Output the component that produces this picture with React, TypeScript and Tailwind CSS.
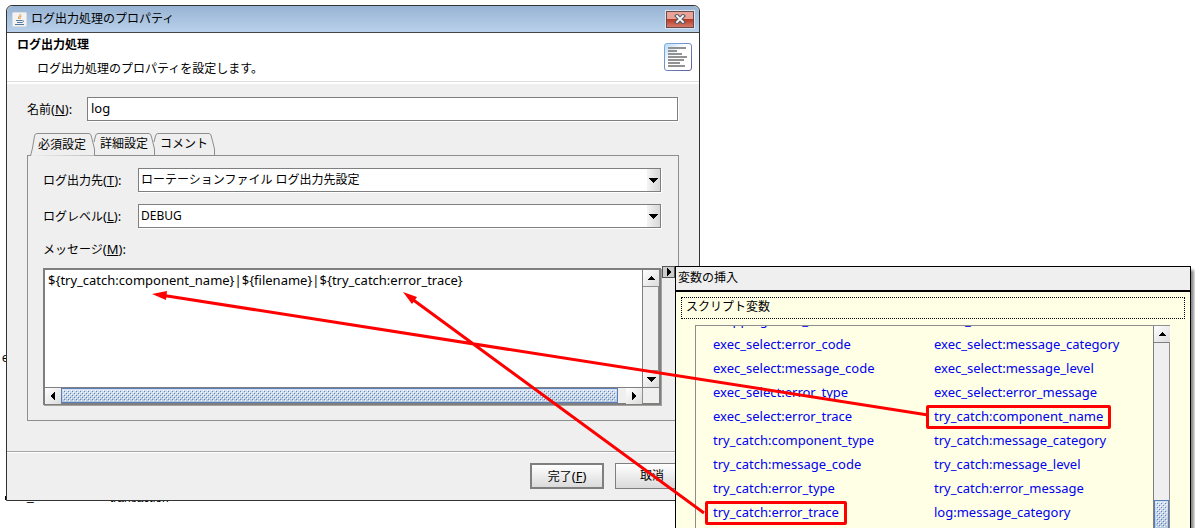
import type { ReactNode } from "react";

const variables = [
  ["mapping:error_trace", "error_level"],
  ["exec_select:error_code", "exec_select:message_category"],
  ["exec_select:message_code", "exec_select:message_level"],
  ["exec_select:error_type", "exec_select:error_message"],
  ["exec_select:error_trace", "try_catch:component_name"],
  ["try_catch:component_type", "try_catch:message_category"],
  ["try_catch:message_code", "try_catch:message_level"],
  ["try_catch:error_type", "try_catch:error_message"],
  ["try_catch:error_trace", "log:message_category"],
];

const highlighted = ["try_catch:component_name", "try_catch:error_trace"];

function Arrow({ dir }: { dir: "up" | "down" | "left" | "right" }) {
  const d = {
    up: "M4 0h1v1h1v1h1v1h1v1H1V3h1V2h1V1h1z",
    down: "M0 0h9v1H8v1H7v1H6v1H5v1H4V4H3V3H2V2H1V1H0z",
    left: "M4 0v8H3V7H2V6H1V5H0V3h1V2h1V1h1V0z",
    right: "M0 0h1v1h1v1h1v1h1v2H3v1H2v1H1v1H0z",
  }[dir];
  const wide = dir === "up" || dir === "down";
  return (
    <svg width={wide ? 9 : 4} height={wide ? 5 : 8} shapeRendering="crispEdges" aria-hidden="true">
      <path d={d} />
    </svg>
  );
}

function ScrollButton({ dir }: { dir: "up" | "down" | "left" | "right" }) {
  return (
    <button
      aria-label={`scroll ${dir}`}
      className="flex size-4 shrink-0 items-center justify-center bg-linear-to-br from-white to-[#dcdcdc]"
    >
      <Arrow dir={dir} />
    </button>
  );
}

function Thumb({ id, className }: { id: string; className: string }) {
  return (
    <div className={`border border-[#5b7db8] bg-linear-to-b from-[#d5e2f1] to-[#b4c9df] p-px ${className}`}>
      <svg className="block h-full w-full" aria-hidden="true">
        <defs>
          <pattern id={id} width="4" height="4" patternUnits="userSpaceOnUse">
            <path d="M1 1h1v1H1zM3 3h1v1H3z" fill="#6685b5" />
            <path d="M0 0h1v1H0zM2 2h1v1H2z" fill="#fff" />
          </pattern>
        </defs>
        <rect width="100%" height="100%" fill={`url(#${id})`} />
      </svg>
    </div>
  );
}

function Hotkey({ children, suffix }: { children: string; suffix?: string }) {
  return (
    <span className="text-[13px]">
      (<u>{children}</u>){suffix}
    </span>
  );
}

function Combo({ id, label, hotkey, value }: { id: string; label: string; hotkey: string; value: string }) {
  return (
    <div className="flex items-center">
      <label htmlFor={id} className="w-[95px] shrink-0">
        {label}
        <Hotkey suffix=":">{hotkey}</Hotkey>
      </label>
      <div className="relative grow border border-[#7f7f7f] bg-white shadow-[1px_1px_0_#fff]">
        <select id={id} className="block h-[22px] w-full appearance-none px-0.5 outline-none">
          <option>{value}</option>
        </select>
        <span className="pointer-events-none absolute inset-y-0 right-0 flex w-[13px] items-center justify-center bg-linear-to-r from-[#f4f4f4] to-[#d8d8d8]">
          <Arrow dir="down" />
        </span>
      </div>
    </div>
  );
}

function Tab({ active, width, children }: { active?: boolean; width: number; children: ReactNode }) {
  return (
    <button
      role="tab"
      aria-selected={!!active}
      className={`relative flex items-center justify-center ${active ? "z-10 -mb-px h-[23px]" : "h-[22px]"}`}
      style={{ width }}
    >
      <svg className="absolute inset-0 overflow-visible" width={width} height="23" aria-hidden="true">
        <path
          d={
            active
              ? `M.5 23L2.500 15L4.500 3Q5 .5 7 .5H${width - 5}Q${width - 3} .5 ${width - 2.5} 4L${width + 0.5} 16V22.5`
              : `M0 9L1.500 3Q2 .5 4 .5H${width - 5}Q${width - 3} .5 ${width - 2.5} 4L${width + 0.5} 16V22`
          }
          fill="#efefef"
          stroke="#8e8e8e"
        />
      </svg>
      <span className="relative">{children}</span>
    </button>
  );
}

function PropertyDialog() {
  return (
    <section
      aria-label="ログ出力処理のプロパティ"
      className="absolute top-[5px] left-1.5 w-[calc(58%+1px)] rounded-t-md border border-[#333] bg-[#efefef]"
    >
      <header className="flex h-[27px] items-center gap-1 rounded-t-md border-b border-[#444] bg-linear-to-b from-[#98b4d4] to-[#b9d1ea] pr-[5px] pl-[5px]">
        <svg width="15" height="15" viewBox="0 0 15 15" aria-hidden="true">
          <rect x=".5" y=".5" width="14" height="14" rx="1" fill="#f3f3f3" stroke="#d8dde2" />
          <path d="M8 2c1 2-3 3-1 5M9.500 4c-2 1-2 2-1 3" fill="none" stroke="#e5861c" />
          <path d="M4 8.500h6M5 10.500h5M3 12.500h9M10.500 8.500c2 0 1 2-1 2" fill="none" stroke="#53789c" />
        </svg>
        <h1 className="grow">ログ出力処理のプロパティ</h1>
        <button
          aria-label="閉じる"
          className="flex h-[17px] w-7 items-center justify-center border border-[#6b4a4a] bg-linear-to-b from-[#e8a396] from-45% via-[#b93a24] via-50% to-[#d4796a] shadow-[0_0_0_1px_#d5e3f2]"
        >
          <svg width="12" height="10" viewBox="0 0 12 10" aria-hidden="true">
            <path d="M3 2l6 6M9 2L3 8" stroke="#4c5560" strokeWidth="4" strokeLinecap="square" />
            <path d="M3 2l6 6M9 2L3 8" stroke="#f4f4f4" strokeWidth="2" strokeLinecap="square" />
          </svg>
        </button>
      </header>

      <div className="flex h-[49px] items-center justify-between border-b border-[#dedede] bg-white pr-[7px] pl-2.5">
        <div>
          <h2 className="font-bold leading-6">ログ出力処理</h2>
          <p className="pl-5 leading-6">ログ出力処理のプロパティを設定します。</p>
        </div>
        <svg width="28" height="28" viewBox="0 0 28 28" aria-hidden="true">
          <defs>
            <linearGradient id="doc-edge" x1="0" y1="0" x2="1" y2="1">
              <stop stopColor="#7fb2e5" />
              <stop offset="1" stopColor="#5f5a9c" />
            </linearGradient>
            <linearGradient id="doc-fill" x1="0" y1="0" x2=".7" y2=".7">
              <stop stopColor="#b5d8fb" />
              <stop offset=".6" stopColor="#fff" />
            </linearGradient>
          </defs>
          <rect x=".5" y=".5" width="27" height="27" rx="2.500" fill="url(#doc-fill)" stroke="url(#doc-edge)" />
          <path d="M4 5h18M4 8h9M4 11h14M4 14h19M4 17h16M4 20h12M4 23h17" stroke="#929292" strokeWidth="2" />
        </svg>
      </div>

      <div className="border-t-2 border-white px-5 pt-[13px] pb-[30px]">
        <div className="flex items-center pr-px">
          <label htmlFor="name" className="w-[60px] shrink-0">
            名前
            <Hotkey suffix=":">N</Hotkey>
          </label>
          <input
            id="name"
            defaultValue="log"
            className="h-6 min-w-0 grow border border-[#7f7f7f] bg-white px-[3px] pb-0.5 text-[13px] shadow-[1px_1px_0_#fff] outline-none"
          />
        </div>

        <div role="tablist" className="mt-3 flex items-end pl-[3px]">
          <Tab active width={64}>必須設定</Tab>
          <Tab width={60}>詳細設定</Tab>
          <Tab width={60}>コメント</Tab>
        </div>
        <div role="tabpanel" className="border border-[#8e8e8e] px-[15px] pt-3 pb-[15px]">
          <div className="flex flex-col gap-3 pr-0.5">
            <Combo id="target" label="ログ出力先" hotkey="T" value="ローテーションファイル ログ出力先設定" />
            <Combo id="level" label="ログレベル" hotkey="L" value="DEBUG" />
          </div>
          <label htmlFor="message" className="mt-3 mb-2.5 block h-[18px]">
            メッセージ
            <Hotkey suffix=":">M</Hotkey>
          </label>
          <div className="mr-0.5 border-2 border-[#7f7f7f] shadow-[1px_1px_0_#a5a29e]">
            <div className="flex h-[117px] bg-white">
              <textarea
                id="message"
                wrap="off"
                defaultValue="${try_catch:component_name}|${filename}|${try_catch:error_trace}"
                className="min-w-0 grow resize-none overflow-hidden px-[3px] pt-px text-[13px] leading-[18px] outline-none"
              />
              <div className="flex w-[17px] flex-col justify-between border-l border-[#7f7f7f] bg-[#efefef]">
                <ScrollButton dir="up" />
                <div className="grow border-y border-r border-[#8e8e8e]" />
                <ScrollButton dir="down" />
              </div>
            </div>
            <div className="flex h-4 border-t border-[#7f7f7f] bg-[#efefef]">
              <ScrollButton dir="left" />
              <Thumb id="dots-h" className="grow" />
              <span className="w-2" />
              <ScrollButton dir="right" />
              <span className="w-[17px] border-l border-[#8e8e8e]" />
            </div>
          </div>
        </div>
      </div>

      <footer className="flex h-[49px] items-center gap-[11px] border-t border-[#a5a5a5] pl-[523px] shadow-[inset_0_1px_0_#fff]">
        <button className="h-[26px] w-[74px] shrink-0 border-2 border-[#7f7f7f] bg-linear-to-b from-white to-[#dadada]">
          完了
          <Hotkey>F</Hotkey>
        </button>
        <button className="h-[26px] w-[74px] shrink-0 border border-[#7f7f7f] bg-linear-to-b from-white to-[#dadada]">
          取消
        </button>
      </footer>
    </section>
  );
}

function VariablePopup() {
  return (
    <section
      aria-label="変数の挿入"
      className="absolute top-[266px] bottom-0 left-[675px] flex w-[516px] flex-col border border-b-0 border-black bg-[#ffffe6] shadow-[3px_4px_3px_#888]"
    >
      <h2 className="h-[25px] shrink-0 border-b-2 border-black bg-[#efefef] pl-0.5 leading-[22px]">変数の挿入</h2>
      <h3 className="mx-[5px] mt-[5px] h-[22px] shrink-0 border border-dotted border-black pl-1 leading-[18px]">
        スクリプト変数
      </h3>
      <div className="mt-1.5 mr-5 ml-[19px] flex min-h-0 grow border border-b-0 border-[#8e8e8e]">
        <div className="min-w-0 grow overflow-hidden">
          <ul className="-mt-[17px] grid grid-cols-[221px_1fr] pl-[9px]">
            {variables.flat().map((name) => (
              <li key={name} className="flex h-6 items-center">
                <a
                  href="#"
                  className={`border-[3px] px-[5px] pb-0.5 text-[13px] leading-4 text-[#0000f0] ${
                    highlighted.includes(name) ? "rounded-xs border-[#f00]" : "border-transparent"
                  }`}
                >
                  {name}
                </a>
              </li>
            ))}
          </ul>
        </div>
        <div className="flex w-4 shrink-0 flex-col border-l border-[#7f7f7f] bg-[#efefef]">
          <ScrollButton dir="up" />
          <div className="grow border-t border-[#7f7f7f]" />
          <Thumb id="dots-v" className="h-7 border-b-0" />
        </div>
      </div>
    </section>
  );
}

export default function App() {
  return (
    <main className="relative h-screen min-h-[528px] overflow-hidden bg-white font-['Noto_Sans','Noto_Sans_CJK_JP',sans-serif] text-[12px] leading-[18px] text-black">
      {/* canvas labels left showing behind the dialog */}
      <div className="font-['Liberation_Sans',sans-serif] leading-3" aria-hidden="true">
        <span className="absolute top-[352px] left-0.5">e</span>
        <span className="absolute top-[490px] left-[27px]">_</span>
        <span className="absolute top-[492px] left-[110px]">transaction</span>
        <span className="absolute top-[496px] left-[5px] h-1 w-1 bg-black" />
      </div>

      <PropertyDialog />
      <button
        aria-label="変数の挿入を開く"
        className="absolute top-[266px] left-[662px] flex h-3 w-[13px] items-center justify-center border border-[#555] bg-[#ccc]"
      >
        <Arrow dir="right" />
      </button>
      <VariablePopup />

      {/* annotation arrows */}
      <svg className="pointer-events-none absolute top-0 left-0" width="1195" height="528" aria-hidden="true">
        <path d="M928 415L164 295.500M704 513L412 299" stroke="#f00" strokeWidth="3" />
        <path d="M152 294l15-3-1 9zM403 292l14 5-5 7z" fill="#f00" />
      </svg>
    </main>
  );
}
